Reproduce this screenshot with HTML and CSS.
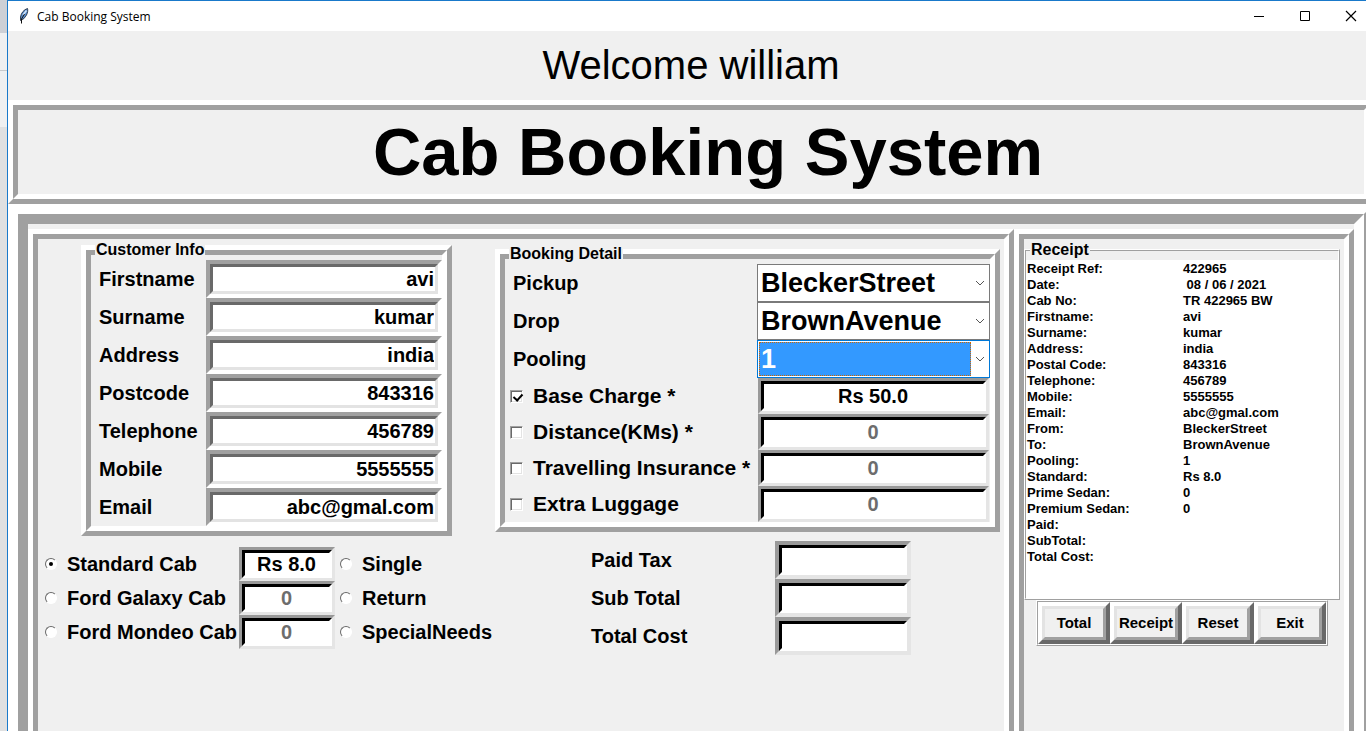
FILE: index.html
```html
<!DOCTYPE html>
<html lang="en">
<head>
    <meta charset="UTF-8">
    <meta name="viewport" content="width=device-width, initial-scale=1.0">
    <title>Cab Booking System</title>
    <link rel="stylesheet" href="styles.css">
</head>
<body>
    <div class="desktop"></div>
    <div class="window">
        <div class="titlebar">
            <svg class="feather" width="16" height="16" viewBox="0 0 16 16">
                <path d="M11.500 .5C8 1.500 5 5 4.500 9L4.500 12.500L8 10.500L10.500 7C11.800 4.500 12 2 11.500 .5Z" fill="#5b8fd0" stroke="#17202c" stroke-width=".8"/>
                <path d="M10.500 2.500L7 7" stroke="#d5e6f8" stroke-width="1.400" fill="none"/>
                <path d="M8.500 6L5.500 11V15.500" stroke="#111" stroke-width="1" fill="none"/>
            </svg>
            <span class="caption">Cab Booking System</span>
            <button type="button" class="win-btn" aria-label="Minimize">
                <svg width="12" height="12" viewBox="0 0 12 12"><path d="M1 6.500H11" stroke="#000"/></svg>
            </button>
            <button type="button" class="win-btn" aria-label="Maximize">
                <svg width="12" height="12" viewBox="0 0 12 12"><path d="M1.500 1.500H10.500V10.500H1.500Z" stroke="#000" fill="none"/></svg>
            </button>
            <button type="button" class="win-btn" aria-label="Close">
                <svg width="12" height="12" viewBox="0 0 12 12"><path d="M1 1L11 11M11 1L1 11" stroke="#000" stroke-width="1.200"/></svg>
            </button>
        </div>

        <p class="welcome">Welcome william</p>

        <header class="ridge">
            <div class="ridge-in">
                <h1>Cab Booking System</h1>
            </div>
        </header>

        <main class="ridge">
            <div class="ridge-in main-in">
                <section class="ridge left">
                    <div class="ridge-in">
                        <div class="top-row">
                            <fieldset class="ridge customer">
                                <legend>Customer Info</legend>
                                <div class="ridge-in customer-in">
                                    <label for="firstname">Firstname</label>
                                    <div class="entry"><input type="text" id="firstname" value="avi"></div>
                                    <label for="surname">Surname</label>
                                    <div class="entry"><input type="text" id="surname" value="kumar"></div>
                                    <label for="address">Address</label>
                                    <div class="entry"><input type="text" id="address" value="india"></div>
                                    <label for="postcode">Postcode</label>
                                    <div class="entry"><input type="text" id="postcode" value="843316"></div>
                                    <label for="telephone">Telephone</label>
                                    <div class="entry"><input type="text" id="telephone" value="456789"></div>
                                    <label for="mobile">Mobile</label>
                                    <div class="entry"><input type="text" id="mobile" value="5555555"></div>
                                    <label for="email">Email</label>
                                    <div class="entry"><input type="text" id="email" value="abc@gmal.com"></div>
                                </div>
                            </fieldset>

                            <fieldset class="ridge booking">
                                <legend>Booking Detail</legend>
                                <div class="ridge-in booking-in">
                                    <label class="plain" for="pickup">Pickup</label>
                                    <div class="combo">
                                        <select id="pickup"><option>BleckerStreet</option><option>BrownAvenue</option></select>
                                        <svg width="17" height="10" viewBox="0 0 17 10"><path d="M5 3L9 7L13 3" stroke="#555" fill="none"/></svg>
                                    </div>
                                    <label class="plain" for="drop">Drop</label>
                                    <div class="combo">
                                        <select id="drop"><option>BrownAvenue</option><option>BleckerStreet</option></select>
                                        <svg width="17" height="10" viewBox="0 0 17 10"><path d="M5 3L9 7L13 3" stroke="#555" fill="none"/></svg>
                                    </div>
                                    <label class="plain" for="pooling">Pooling</label>
                                    <div class="combo active">
                                        <select id="pooling"><option>1</option><option>2</option><option>3</option><option>4</option></select>
                                        <svg width="17" height="10" viewBox="0 0 17 10"><path d="M5 3L9 7L13 3" stroke="#555" fill="none"/></svg>
                                    </div>
                                    <label class="check"><input type="checkbox" checked><span>Base Charge *</span></label>
                                    <div class="entry dark"><input type="text" value="Rs 50.0" aria-label="Base Charge"></div>
                                    <label class="check"><input type="checkbox"><span>Distance(KMs) *</span></label>
                                    <div class="entry dark"><input type="text" value="0" aria-label="Distance" disabled></div>
                                    <label class="check"><input type="checkbox"><span>Travelling Insurance *</span></label>
                                    <div class="entry dark"><input type="text" value="0" aria-label="Travelling Insurance" disabled></div>
                                    <label class="check"><input type="checkbox"><span>Extra Luggage</span></label>
                                    <div class="entry dark"><input type="text" value="0" aria-label="Extra Luggage" disabled></div>
                                </div>
                            </fieldset>
                        </div>

                        <div class="bottom-row">
                            <div class="cabs">
                                <label class="radio"><input type="radio" name="cab" checked><span>Standard Cab</span></label>
                                <div class="entry dark"><input type="text" value="Rs 8.0" aria-label="Standard Cab"></div>
                                <label class="radio trip"><input type="radio" name="trip"><span>Single</span></label>
                                <label class="radio"><input type="radio" name="cab"><span>Ford Galaxy Cab</span></label>
                                <div class="entry dark"><input type="text" value="0" aria-label="Ford Galaxy Cab" disabled></div>
                                <label class="radio trip"><input type="radio" name="trip"><span>Return</span></label>
                                <label class="radio"><input type="radio" name="cab"><span>Ford Mondeo Cab</span></label>
                                <div class="entry dark"><input type="text" value="0" aria-label="Ford Mondeo Cab" disabled></div>
                                <label class="radio trip"><input type="radio" name="trip"><span>SpecialNeeds</span></label>
                            </div>
                            <div class="totals">
                                <label for="tax">Paid Tax</label>
                                <div class="entry dark thick"><input type="text" id="tax"></div>
                                <label for="subtotal">Sub Total</label>
                                <div class="entry dark thick"><input type="text" id="subtotal"></div>
                                <label for="total">Total Cost</label>
                                <div class="entry dark thick"><input type="text" id="total"></div>
                            </div>
                        </div>
                    </div>
                </section>

                <section class="ridge right">
                    <div class="ridge-in">
                        <fieldset class="ridge thin receipt">
                            <legend>Receipt</legend>
                            <div class="ridge-in">
                                <textarea rows="21" aria-label="Receipt">Receipt Ref:	422965
Date:	 08 / 06 / 2021
Cab No:	TR 422965 BW
Firstname:	avi
Surname:	kumar
Address:	india
Postal Code:	843316
Telephone:	456789
Mobile:	5555555
Email:	abc@gmal.com
From:	BleckerStreet
To:	BrownAvenue
Pooling:	1
Standard:	Rs 8.0
Prime Sedan:	0
Premium Sedan:	0
Paid:
SubTotal:
Total Cost:</textarea>
                            </div>
                        </fieldset>
                        <div class="ridge thin buttons">
                            <div class="ridge-in">
                                <button type="button" class="btn"><span>Total</span></button>
                                <button type="button" class="btn"><span>Receipt</span></button>
                                <button type="button" class="btn"><span>Reset</span></button>
                                <button type="button" class="btn"><span>Exit</span></button>
                            </div>
                        </div>
                    </div>
                </section>
            </div>
        </main>
    </div>
</body>
</html>
```
FILE: styles.css
```css
* {
    box-sizing: border-box;
}
body {
    display: flex;
    min-height: 100vh;
    margin: 0;
    overflow: hidden;
    font-family: "Liberation Sans", Arial, sans-serif;
    font-size: 20px;
    font-weight: bold;
    color: #000;
}
input, select, textarea, button {
    font: inherit;
    color: inherit;
    margin: 0;
    padding: 0;
    border-radius: 0;
}

/* strip of the desktop left of the window */
.desktop {
    flex: none;
    width: 7px;
    background: linear-gradient(#cdd0d6 33px, #eff0f1 33px, #eff0f1 70px, #c8cacc 70px, #c8cacc 71px, #eff0f1 71px, #eff0f1 127px, #dfe0e1 127px);
}
/* window hangs a little over the right edge of the screen */
.window {
    flex: none;
    display: flex;
    flex-direction: column;
    width: calc(100% + 1px);
    border-left: 1px solid #1979ca;
    border-top: 1px solid #1979ca;
    background: #f0f0f0;
}
.titlebar {
    display: flex;
    align-items: center;
    height: 30px;
    padding-left: 8px;
    background: #fff;
}
.caption {
    flex: 1;
    margin-left: 5px;
    font-family: "Open Sans", "Segoe UI", sans-serif;
    font-size: 12px;
    font-weight: normal;
}
.win-btn {
    display: flex;
    align-items: center;
    justify-content: center;
    width: 46px;
    height: 30px;
    border: none;
    background: none;
}
.welcome {
    margin: 0;
    line-height: 69px;
    font-size: 40px;
    font-weight: normal;
    text-align: center;
}

/* double border: light edge outside, dark edge inside */
.ridge {
    margin: 0;
    padding: 0;
    min-width: 0;
    border: 5px solid;
    border-color: #fff #a0a0a0 #a0a0a0 #fff;
}
.ridge > .ridge-in {
    border: 5px solid;
    border-color: #a0a0a0 #fff #fff #a0a0a0;
}
.ridge.thin, .ridge.thin > .ridge-in {
    border-width: 1px;
}
h1 {
    margin: 0;
    padding-left: 34px;
    line-height: 84px;
    font-size: 67px;
    text-align: center;
}
/* main frame and its panels run on below the screen, so no bottom edge */
main.ridge {
    flex: 1;
    display: flex;
    border-width: 10px 10px 0;
}
.ridge > .main-in {
    flex: 1;
    display: flex;
    padding-top: 5px;
    border-width: 10px 10px 0;
}
.left, .right {
    display: flex;
    border-bottom: none;
}
.left {
    flex: 1;
}
.right {
    flex: none;
    width: 340px;
}
.left > .ridge-in, .right > .ridge-in {
    flex: 1;
    min-width: 0;
    border-bottom: none;
}

fieldset {
    position: relative;
}
legend {
    position: absolute;
    top: -9px;
    left: 9px;
    padding: 0 1px;
    font-size: 16px;
    line-height: 18px;
    background: #f0f0f0;
}
.top-row {
    display: flex;
    align-items: flex-start;
    padding: 6px 4px 0 43px;
}
.customer {
    flex: none;
    width: 371px;
}
.customer-in {
    display: grid;
    grid-template-columns: 107px 1fr;
    grid-auto-rows: 38px;
    align-items: center;
    padding: 5px 0 0 8px;
}
.booking {
    flex: 1;
    margin: 4px 0 0 43px;
}
.booking-in {
    display: grid;
    grid-template-columns: 1fr 233px;
    align-items: center;
    padding-top: 5px;
}
.plain {
    padding-left: 8px;
}

/* sunken text box, second edge is drawn by the input */
.entry {
    height: 38px;
    border: 4px solid;
    border-color: #a0a0a0 #fff #fff #a0a0a0;
}
.entry input {
    display: block;
    width: 100%;
    height: 100%;
    border: 3px solid;
    border-color: #696969 #e3e3e3 #e3e3e3 #696969;
    padding-right: 1px;
    background: #fff;
    text-align: right;
}
.entry.dark {
    height: 36px;
    border-width: 3px;
    border-color: #999 #e5e5e5 #e5e5e5 #999;
}
.entry.dark input {
    border-color: #000 #fff #fff #000;
    text-align: center;
}
.entry.thick {
    height: 38px;
    border-width: 4px;
}
.entry input:disabled {
    color: #6d6d6d;
}
.booking .entry {
    margin: 0 1px;
}

.combo {
    display: flex;
    align-items: center;
    height: 38px;
    padding: 1px;
    border: 1px solid #7a7a7a;
    background: #fff;
}
.combo select {
    flex: 1;
    min-width: 0;
    height: 34px;
    padding-left: 2px;
    border: none;
    appearance: none;
    background: #fff;
    font-size: 27px;
}
.combo.active {
    border-color: #0078d7;
}
.combo.active select {
    border: 1px dotted #cc6600;
    padding-left: 1px;
    background: #3399ff;
    color: #fff;
}

.check, .radio {
    display: flex;
    align-items: center;
    gap: 10px;
    white-space: nowrap;
}
.check {
    padding-left: 5px;
    font-size: 21px;
}
.check input {
    appearance: none;
    flex: none;
    width: 13px;
    height: 13px;
    border: 1px solid;
    border-color: #a0a0a0 #fff #fff #a0a0a0;
    background: #fff;
    box-shadow: inset 1px 1px #696969, inset -1px -1px #e3e3e3;
}
.check input:checked::before {
    content: "";
    display: block;
    width: 4px;
    height: 7px;
    margin: 1px 0 0 4px;
    border: solid #000;
    border-width: 0 2px 2px 0;
    transform: rotate(42deg);
}
.radio {
    padding-left: 7px;
}
.radio.trip {
    padding-left: 5px;
}
.radio input {
    appearance: none;
    flex: none;
    display: flex;
    align-items: center;
    justify-content: center;
    width: 12px;
    height: 12px;
    border: 1px solid;
    border-color: #696969 #fff #fff #696969;
    border-radius: 50%;
    background: #fff;
}
.radio input:checked::before {
    content: "";
    width: 4px;
    height: 4px;
    border-radius: 50%;
    background: #000;
}

.bottom-row {
    display: flex;
    align-items: flex-start;
}
.cabs {
    display: grid;
    grid-template-columns: 201px 96px 256px;
    padding-top: 11px;
}
.cabs .entry {
    height: 34px;
}
.totals {
    display: grid;
    grid-template-columns: 184px 136px;
    align-items: center;
    padding-top: 5px;
}

.receipt {
    margin: 10px 4px 0 0;
}
.receipt legend {
    left: 5px;
}
.receipt > .ridge-in {
    padding-top: 9px;
}
.receipt textarea {
    display: block;
    width: 100%;
    height: 338px;
    padding: 1px;
    border: none;
    resize: none;
    background: #fff;
    font-size: 13px;
    line-height: 16px;
    tab-size: 156px;
}
.buttons {
    margin: 0 16px 0 12px;
}
.buttons > .ridge-in {
    display: flex;
}
.btn {
    flex: 1;
    height: 42px;
    border: 4px solid;
    border-color: #fff #696969 #696969 #fff;
    background: #f0f0f0;
    font-size: 15px;
}
.btn span {
    display: block;
    border: 3px solid;
    border-color: #e3e3e3 #a0a0a0 #a0a0a0 #e3e3e3;
    line-height: 28px;
}
```
